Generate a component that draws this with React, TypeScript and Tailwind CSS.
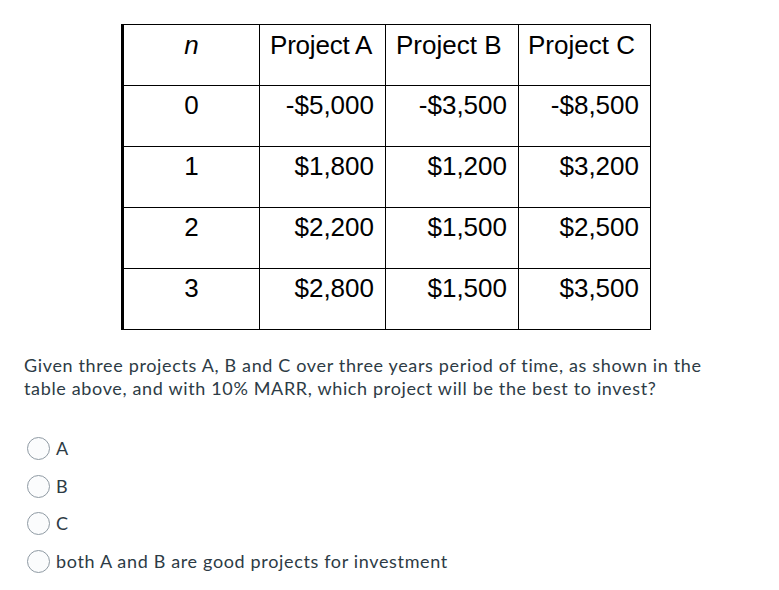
import React from "react";

const rows = [
  ["0", "-$5,000", "-$3,500", "-$8,500"],
  ["1", "$1,800", "$1,200", "$3,200"],
  ["2", "$2,200", "$1,500", "$2,500"],
  ["3", "$2,800", "$1,500", "$3,500"],
];

const options = ["A", "B", "C", "both A and B are good projects for investment"];

export default function App() {
  const tbl = { fontFamily: '"Liberation Sans", Arial, sans-serif' };
  const lato = { fontFamily: 'Lato, "Noto Sans", sans-serif' };
  return (
    <div className="w-[779px] h-[590px] bg-white relative overflow-hidden">
      <div className="pt-[24px] pl-[121px]">
        <div
          className="grid grid-cols-[136px_126px_133px_132px] w-[530px] border-l-[3px] border-t border-black text-black text-[26px] leading-[30px]"
          style={tbl}
        >
          <div className="h-[61px] border-r border-b border-black text-center pt-[5px] italic">n</div>
          <div className="h-[61px] border-r border-b border-black pl-[10px] pt-[5px] whitespace-nowrap tracking-[-0.2px]">Project A</div>
          <div className="h-[61px] border-r border-b border-black pl-[10px] pt-[5px] whitespace-nowrap">Project B</div>
          <div className="h-[61px] border-r border-b border-black pl-[9px] pt-[5px] whitespace-nowrap">Project C</div>
          {rows.map((r, i) => (
            <React.Fragment key={i}>
              <div className="h-[61px] border-r border-b border-black text-center pt-[4px]">{r[0]}</div>
              <div className="h-[61px] border-r border-b border-black text-right pr-[11px] pt-[4px]">{r[1]}</div>
              <div className="h-[61px] border-r border-b border-black text-right pr-[11px] pt-[4px]">{r[2]}</div>
              <div className="h-[61px] border-r border-b border-black text-right pr-[11px] pt-[4px]">{r[3]}</div>
            </React.Fragment>
          ))}
        </div>
      </div>
      <div className="pl-[24px] pt-[24px] text-[#2d3b45]" style={lato}>
        <p className="text-[18px] leading-[22.5px] tracking-[0.65px] w-[700px]">
          Given three projects A, B and C over three years period of time, as shown in the table above, and with 10% MARR, which project will be the best to invest?
        </p>
        <div className="mt-[38px] flex flex-col gap-[14.7px] pl-[3px]">
          {options.map((o) => (
            <div key={o} className="flex items-center gap-[6px] h-[23px]">
              <span className="w-[23px] h-[23px] rounded-full border border-[#8f9aa3] bg-[#fbfcfd] shrink-0" />
              <span className="text-[18px] leading-[23px] tracking-[0.65px]">{o}</span>
            </div>
          ))}
        </div>
      </div>
    </div>
  );
}
